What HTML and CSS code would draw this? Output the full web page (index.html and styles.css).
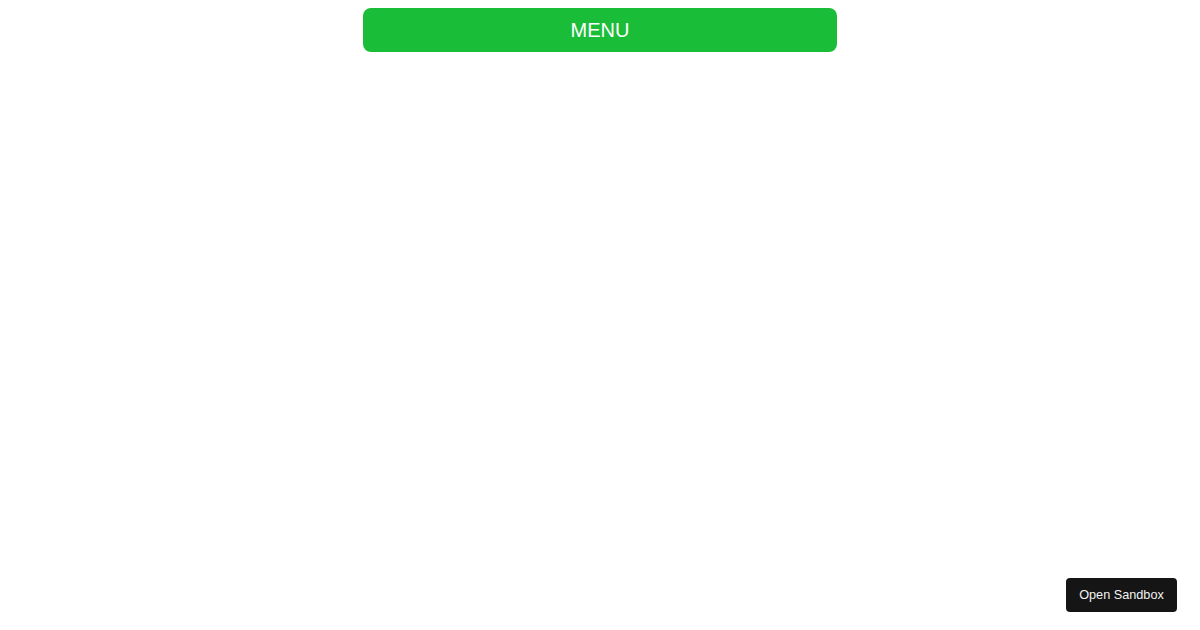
FILE: index.html
```html
<!DOCTYPE html>
<html>
<head>
<meta charset="utf-8">
<link rel="stylesheet" href="styles.css">
</head>
<body>
<div class="page">
  <button class="menu-btn">MENU</button>
</div>
<a class="sandbox-btn">Open Sandbox</a>
</body>
</html>
```
FILE: styles.css
```css
html, body {
  margin: 0;
  padding: 0;
  background: #ffffff;
  font-family: "Liberation Sans", Arial, sans-serif;
}
.page {
  display: flex;
  justify-content: center;
  padding-top: 8px;
}
.menu-btn {
  width: 474px;
  height: 44px;
  background: #1abd38;
  color: #ffffff;
  border: none;
  border-radius: 8px;
  font-family: "Liberation Sans", Arial, sans-serif;
  font-size: 20px;
  padding: 0;
  cursor: pointer;
}
.sandbox-btn {
  position: fixed;
  right: 23px;
  bottom: 18px;
  width: 111px;
  height: 34px;
  box-sizing: border-box;
  padding-bottom: 1px;
  display: flex;
  align-items: center;
  justify-content: center;
  background: #151515;
  color: #f2f2f2;
  border-radius: 4px;
  font-size: 12.7px;
}
```
